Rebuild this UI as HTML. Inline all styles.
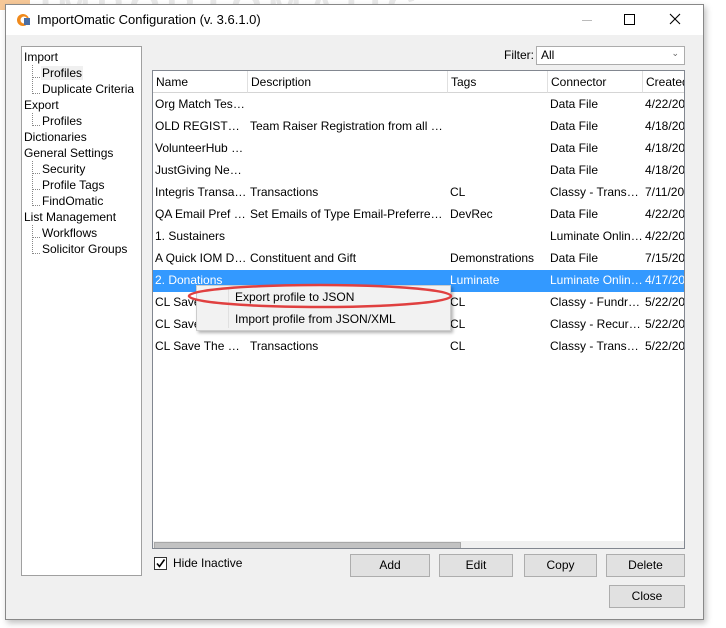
<!DOCTYPE html>
<html><head><style>
*{margin:0;padding:0;box-sizing:border-box}
body{width:726px;height:628px;background:#fff;position:relative;overflow:hidden;font-family:"Liberation Sans",sans-serif;font-size:12px;color:#000}
.a{position:absolute;white-space:nowrap}
.win{position:absolute;left:5px;top:4px;width:699px;height:616px;background:#f0f0f0;border:1px solid #888;box-shadow:2px 3px 6px rgba(0,0,0,.25)}
.title{position:absolute;left:0;top:0;width:697px;height:30px;background:#fff}
.tree{left:15px;top:41px;width:121px;height:530px;background:#fff;border:1px solid #a0a0a0}
.list{left:146px;top:65px;width:533px;height:479px;background:#fff;border:1px solid #828790;overflow:hidden}
.hdr{position:absolute;top:0;height:22px;background:#fff;border-right:1px solid #e0e0e0;border-bottom:1px solid #d5d5d5;padding:4px 3px}
.row{position:absolute;left:0;width:533px;height:22px}
.row span{position:absolute;top:3px;overflow:hidden;text-overflow:ellipsis;white-space:nowrap}
.c1{left:2px;width:92px}.c2{left:97px;width:196px}.c3{left:297px;width:96px}.c4{left:397px;width:93px}.c5{left:492px;width:40px;text-overflow:clip!important}
.btn{position:absolute;height:23px;background:#e1e1e1;border:1px solid #adadad;text-align:center;line-height:21px}
.dot{position:absolute;border-left:1px dotted #888;border-bottom:1px dotted #888}
</style></head><body>
<div class="a" style="left:40px;top:-14px;font-size:40px;font-weight:bold;color:#e8e8e8;letter-spacing:6px">IMPORTOMATIC</div>
<div class="a" style="left:0;top:0;width:30px;height:10px;background:#f6c898"></div>
<div class="win">
<div class="title">
<svg class="a" style="left:10px;top:7px" width="16" height="16"><circle cx="7" cy="8" r="6" fill="#f08a1c"/><circle cx="8" cy="8" r="3.5" fill="#fff"/><rect x="8" y="6" width="6" height="7" fill="#4a6fa5"/></svg>
<div class="a" style="left:31px;top:7px;font-size:13px">ImportOmatic Configuration (v. 3.6.1.0)</div>
<div class="a" style="left:576px;top:15px;width:10px;border-top:1px solid #bbb"></div>
<div class="a" style="left:618px;top:9px;width:11px;height:11px;border:1px solid #000"></div>
<svg class="a" style="left:663px;top:8px" width="12" height="12"><path d="M1 1L11 11M11 1L1 11" stroke="#000" stroke-width="1.1"/></svg>
</div>
<div class="a tree">
<div class="a" style="left:2px;top:3px">Import</div>
<div class="a" style="left:19px;top:19px;background:#f0f0f0;padding:0 1px">Profiles</div>
<div class="a" style="left:20px;top:35px">Duplicate Criteria</div>
<div class="a" style="left:2px;top:51px">Export</div>
<div class="a" style="left:20px;top:67px">Profiles</div>
<div class="a" style="left:2px;top:83px">Dictionaries</div>
<div class="a" style="left:2px;top:99px">General Settings</div>
<div class="a" style="left:20px;top:115px">Security</div>
<div class="a" style="left:20px;top:131px">Profile Tags</div>
<div class="a" style="left:20px;top:147px">FindOmatic</div>
<div class="a" style="left:2px;top:163px">List Management</div>
<div class="a" style="left:20px;top:179px">Workflows</div>
<div class="a" style="left:20px;top:195px">Solicitor Groups</div>
<div class="dot" style="left:10px;top:18px;width:8px;height:29px"></div>
<div class="dot" style="left:10px;top:26px;width:8px;height:5px;border-left:none"></div>
<div class="dot" style="left:10px;top:66px;width:8px;height:13px"></div>
<div class="dot" style="left:10px;top:114px;width:8px;height:45px"></div>
<div class="dot" style="left:10px;top:122px;width:8px;height:5px;border-left:none"></div>
<div class="dot" style="left:10px;top:138px;width:8px;height:5px;border-left:none"></div>
<div class="dot" style="left:10px;top:178px;width:8px;height:29px"></div>
<div class="dot" style="left:10px;top:186px;width:8px;height:5px;border-left:none"></div>
</div>
<div class="a" style="left:498px;top:43px">Filter:</div>
<div class="a" style="left:530px;top:41px;width:149px;height:19px;background:#fff;border:1px solid #acacac;padding:1px 4px">All<span style="position:absolute;right:5px;top:1px;font-size:9px;color:#666">&#8964;</span></div>
<div class="a list">
<div class="hdr" style="left:0;width:95px">Name</div>
<div class="hdr" style="left:95px;width:200px">Description</div>
<div class="hdr" style="left:295px;width:100px">Tags</div>
<div class="hdr" style="left:395px;width:95px">Connector</div>
<div class="hdr" style="left:490px;width:50px">Created</div>
<div class="row" style="top:23px"><span class="c1">Org Match Test for Sample</span><span class="c4">Data File</span><span class="c5">4/22/20</span></div>
<div class="row" style="top:45px"><span class="c1">OLD REGISTRATION</span><span class="c2">Team Raiser Registration from all events here</span><span class="c4">Data File</span><span class="c5">4/18/20</span></div>
<div class="row" style="top:67px"><span class="c1">VolunteerHub - Import</span><span class="c4">Data File</span><span class="c5">4/18/20</span></div>
<div class="row" style="top:89px"><span class="c1">JustGiving New Profile</span><span class="c4">Data File</span><span class="c5">4/18/20</span></div>
<div class="row" style="top:111px"><span class="c1">Integris Transactions</span><span class="c2">Transactions</span><span class="c3">CL</span><span class="c4">Classy - Transactions</span><span class="c5">7/11/20</span></div>
<div class="row" style="top:133px"><span class="c1">QA Email Pref to Test</span><span class="c2">Set Emails of Type Email-Preferred to test</span><span class="c3">DevRec</span><span class="c4">Data File</span><span class="c5">4/22/20</span></div>
<div class="row" style="top:155px"><span class="c1">1. Sustainers</span><span class="c4">Luminate Online - Sustainers</span><span class="c5">4/22/20</span></div>
<div class="row" style="top:177px"><span class="c1">A Quick IOM Demo</span><span class="c2">Constituent and Gift</span><span class="c3">Demonstrations</span><span class="c4">Data File</span><span class="c5">7/15/20</span></div>
<div class="row" style="top:199px;background:#3399ff;color:#fff"><span class="c1">2. Donations</span><span class="c3">Luminate</span><span class="c4">Luminate Online - Donations</span><span class="c5">4/17/20</span></div>
<div class="row" style="top:221px"><span class="c1">CL Save The Birds</span><span class="c3">CL</span><span class="c4">Classy - Fundraising</span><span class="c5">5/22/20</span></div>
<div class="row" style="top:243px"><span class="c1">CL Save The Birds</span><span class="c3">CL</span><span class="c4">Classy - Recurring</span><span class="c5">5/22/20</span></div>
<div class="row" style="top:265px"><span class="c1">CL Save The Birds</span><span class="c2">Transactions</span><span class="c3">CL</span><span class="c4">Classy - Transactions</span><span class="c5">5/22/20</span></div>
<div class="a" style="left:0;top:470px;width:533px;height:9px;background:#f0f0f0"></div>
<div class="a" style="left:1px;top:471px;width:307px;height:8px;background:#c2c2c2;border:1px solid #a8a8a8"></div>
</div>
<div class="a" style="left:148px;top:552px;width:13px;height:13px;background:#fff;border:1px solid #333"><svg width="11" height="11" style="position:absolute;left:0;top:0"><path d="M2 5.5L4.5 8.5L9.5 1.5" stroke="#000" stroke-width="1.6" fill="none"/></svg></div>
<div class="a" style="left:167px;top:551px">Hide Inactive</div>
<div class="btn" style="left:344px;top:549px;width:80px">Add</div>
<div class="btn" style="left:433px;top:549px;width:74px">Edit</div>
<div class="btn" style="left:518px;top:549px;width:73px">Copy</div>
<div class="btn" style="left:600px;top:549px;width:79px">Delete</div>
<div class="btn" style="left:603px;top:580px;width:76px">Close</div>
</div>
<div class="a" style="left:196px;top:285px;width:255px;height:46px;background:#f2f2f2;border:1px solid #ccc;box-shadow:2px 2px 3px rgba(0,0,0,.3)">
<div class="a" style="left:31px;top:2px;height:40px;border-left:1px solid #e0e0e0"></div>
<div class="a" style="left:38px;top:4px">Export profile to JSON</div>
<div class="a" style="left:38px;top:26px">Import profile from JSON/XML</div>
</div>
<svg class="a" style="left:186px;top:280px" width="272" height="32"><ellipse cx="134" cy="16" rx="131" ry="11" fill="none" stroke="#e04040" stroke-width="2.5"/></svg>
</body></html>
